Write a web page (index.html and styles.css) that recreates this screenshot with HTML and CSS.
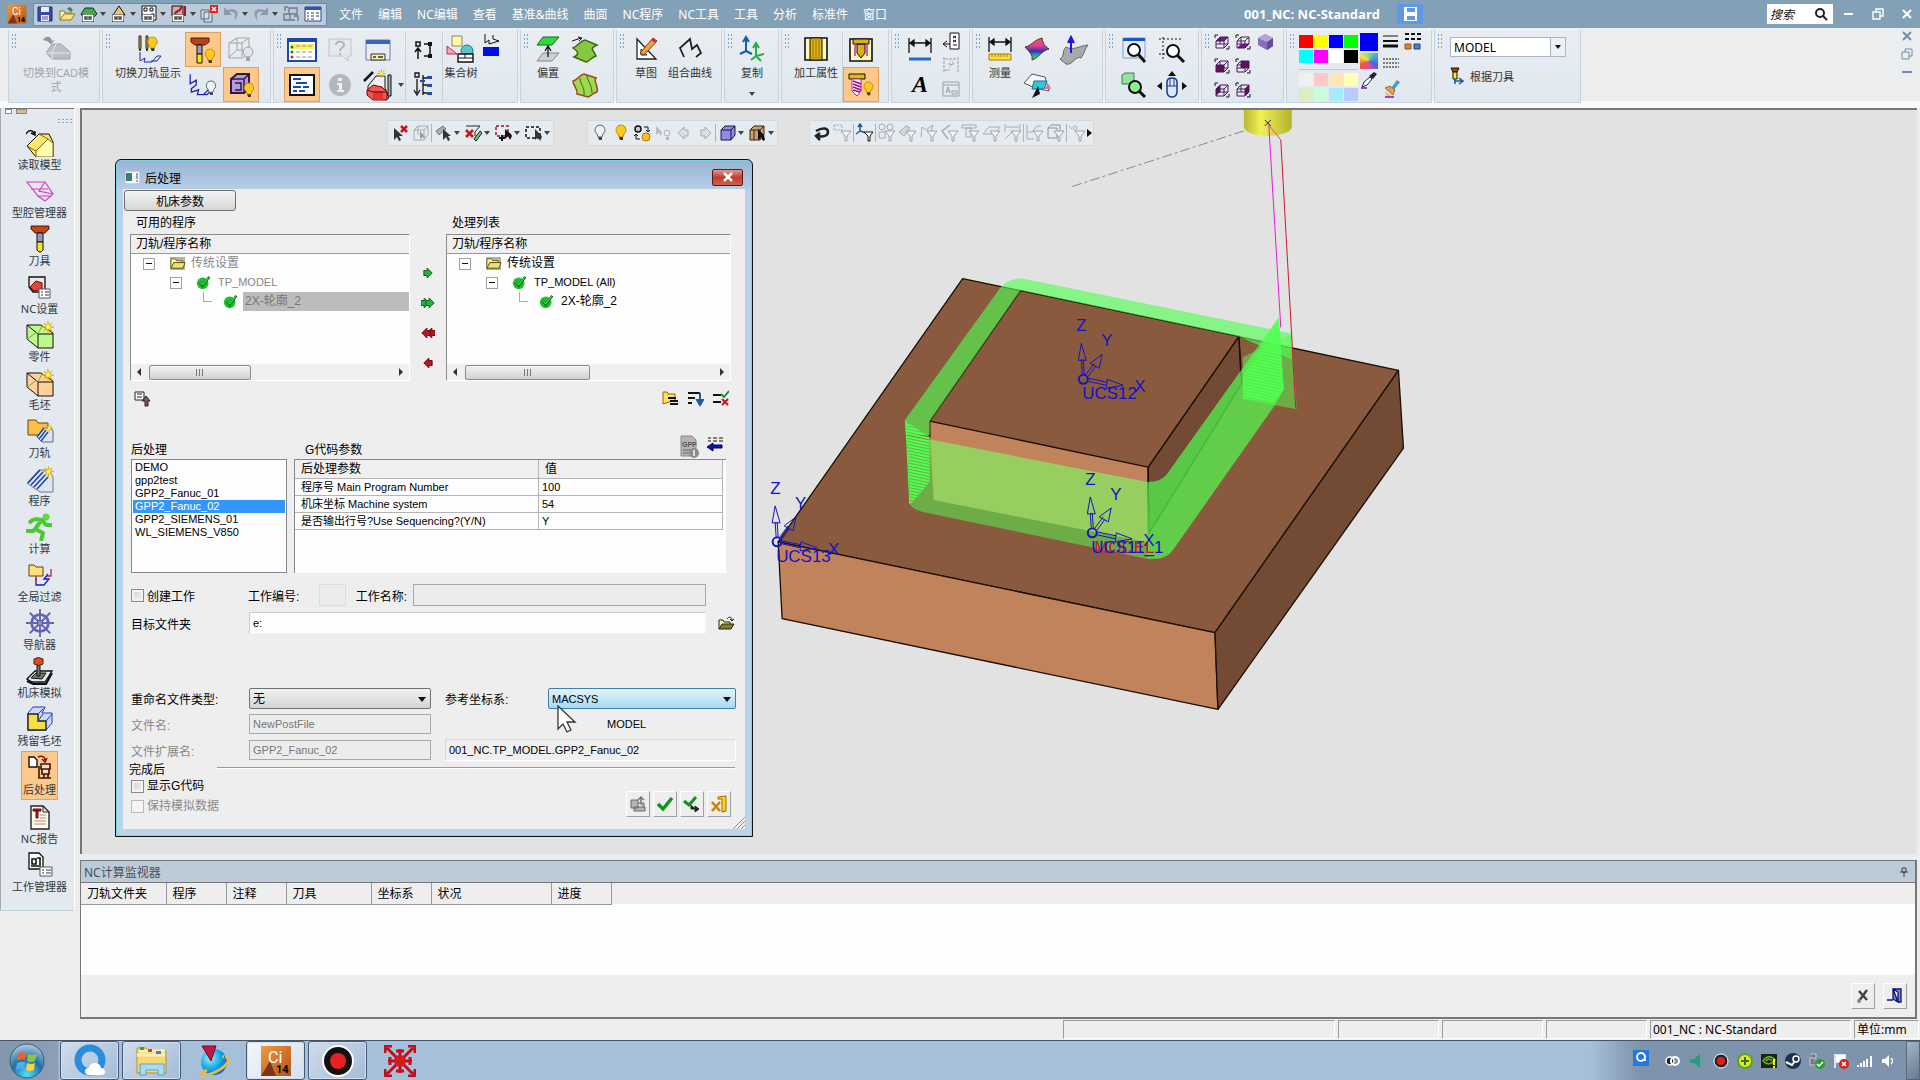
FILE: index.html
```
<!DOCTYPE html>
<html lang="zh-CN">
<head>
    <meta charset="UTF-8">
    <meta name="viewport" content="width=device-width, initial-scale=1.0">
    <title>001_NC : NC-Standard</title>
    <link rel="stylesheet" href="styles.css">
</head>
<body>
    <!-- Shared icon shapes -->
    <svg class="sprite" aria-hidden="true">
        <linearGradient id="gOrange" x1="0" y1="0" x2="1" y2="1"><stop offset="0" stop-color="#f09a3c"/><stop offset="1" stop-color="#b4521c"/></linearGradient>
        <linearGradient id="gYellow" x1="0" y1="0" x2="1" y2="0"><stop offset="0" stop-color="#b9b92c"/><stop offset=".35" stop-color="#f0f05a"/><stop offset="1" stop-color="#b4b42a"/></linearGradient>
        <linearGradient id="gRain" x1="0" y1="0" x2="0" y2="1"><stop offset="0" stop-color="#f05a28"/><stop offset=".35" stop-color="#e040a0"/><stop offset=".6" stop-color="#3030b0"/><stop offset=".8" stop-color="#20b0a0"/><stop offset="1" stop-color="#70d040"/></linearGradient>
        <radialGradient id="gOrb" cx=".5" cy=".9" r=".9"><stop offset="0" stop-color="#4fe0ff"/><stop offset=".5" stop-color="#1f6fa8"/><stop offset="1" stop-color="#b8cfe0"/></radialGradient>
        <radialGradient id="gGlobe" cx=".35" cy=".35" r=".8"><stop offset="0" stop-color="#8ff4ff"/><stop offset=".5" stop-color="#1aa8e8"/><stop offset="1" stop-color="#0a4f9c"/></radialGradient>

        <symbol id="bulb" viewBox="0 0 12 18"><path d="M6 1a5 5 0 0 0-3 9l1 3h4l1-3a5 5 0 0 0-3-9z" fill="#ffc81e" stroke="#c88a00"/><path d="M4 13h4v3H5z" fill="#333"/></symbol>
        <symbol id="bulb-off" viewBox="0 0 12 18"><path d="M6 1a5 5 0 0 0-3 9l1 3h4l1-3a5 5 0 0 0-3-9z" fill="#eef1f4" stroke="#666"/><path d="M4 13h4v3H5z" fill="#444"/></symbol>
        <symbol id="funnel" viewBox="0 0 20 20"><path d="M8 8h10l-4 5v5h-2v-5z" fill="#f2f4f6" stroke="#9aa2aa"/></symbol>
        <symbol id="path3d" viewBox="0 0 20 20"><path d="M1 1v8l5-3v4l-4 3v3l6-2-1 4h5l4-4h3l-4 4h-4" fill="none" stroke="#2222b8" stroke-width="1.1"/></symbol>
        <symbol id="check" viewBox="0 0 18 18"><ellipse cx="8" cy="10" rx="7" ry="7" fill="#18c32c"/><path d="M4 8l4 5 8-11" fill="none" stroke="#0a7a18" stroke-width="3"/><path d="M4 8l4 4 7-9" fill="none" stroke="#8af49a" stroke-width="1"/></symbol>
        <symbol id="folder" viewBox="0 0 18 16"><path d="M1 1h16v14H1z" fill="#b5b39a"/><path d="M2 13V3h5l1 2h6v2" fill="#fff6a0" stroke="#6c682a"/><path d="M2 13L5 7h12l-2 6z" fill="#f0e070" stroke="#4e4a14"/></symbol>
        <symbol id="star" viewBox="0 0 12 12"><path d="M6 0v12M0 6h12M2 2l8 8M10 2l-8 8" stroke="#e8b80c" stroke-width="1.4"/><circle cx="6" cy="6" r="2" fill="#fff27a"/></symbol>
        <symbol id="cubebox" viewBox="0 0 28 28"><path d="M1 4h14l12 8v15H12L1 18z" stroke="#111" fill="inherit"/><path d="M1 4l11 9h15M12 13v14" fill="none" stroke="#111"/><path d="M12 13L16 5M1 18l10-7" stroke="#7a6" fill="none"/></symbol>
        <symbol id="view" viewBox="0 0 18 18"><path d="M2 5V2h3M13 16h3v-3" fill="none" stroke="#111"/><path d="M3 8l4-4h8v7l-4 4H3zM3 8h8v7M11 8l4-4M7 4v7H3M7 11h8" fill="none" stroke="#4a1a5a"/></symbol>
        <symbol id="haas" viewBox="0 0 12 8"><path d="M0 0h12v8H0z" fill="#fff" stroke="#111"/><path d="M3 2v4M3 4h2M5 2v4M7 2v4M7 4h2M9 2v4" stroke="#111"/></symbol>
        <symbol id="dim" viewBox="0 0 24 16"><path d="M1 0v15M23 0v15M2 5h20M2 5l4-3v6zM22 5l-4-3v6z" stroke="#111" stroke-width="1.3" fill="#111"/></symbol>
        <symbol id="arrow-r" viewBox="0 0 12 14"><path d="M1 4h4V1l6 6-6 6v-3H1z" fill="#1fb53a" stroke="#064a10"/></symbol>
        <symbol id="arrow-l" viewBox="0 0 12 14"><path d="M11 4H7V1L1 7l6 6v-3h4z" fill="#c0141e" stroke="#4a0408"/></symbol>
        <symbol id="ci" viewBox="0 0 32 32"><path d="M1 1h30v30H1z" fill="url(#gOrange)"/><path d="M1 31l9-15 6 15z" fill="#7c3418"/><text x="8" y="18" font-family="Roboto" font-size="16" fill="#fff">Ci</text><text x="16" y="28" font-family="Roboto" font-weight="700" font-size="11">14</text></symbol>
    </svg>

    <header class="titlebar">
        <svg class="app-icon" width="20" height="20" viewBox="0 0 32 32"><use href="#ci"/></svg>
        <div class="quickbar">
            <button aria-label="保存"><svg width="18" height="18" viewBox="0 0 18 18"><path d="M2 2h14v14H2z" fill="#3a4aa8" stroke="#1c2a70"/><path d="M5 2h8v5H5zM5 10h8v6H5z" fill="#e8eefa"/><path d="M6 12h6M6 14h6" stroke="#556"/></svg></button>
            <button aria-label="打开"><svg width="18" height="18" viewBox="0 0 18 18"><path d="M2 15V6h4l1 2h7v3" fill="#fff3b0" stroke="#8a7a28"/><path d="M2 15l4-6h11l-4 6z" fill="#ffe680" stroke="#8a7a28"/><path d="M9 4c2-3 5-2 5 1l2-1-3 3-2-2" fill="#2c8a3a"/></svg></button>
            <button class="drop" aria-label="零件"><svg width="18" height="18" viewBox="0 0 18 18"><path d="M1 9l4-6h8l4 6-3 3H3z" fill="#3cb03c" stroke="#134"/><use href="#haas" x="2" y="9" width="12" height="8"/></svg></button>
            <button class="drop" aria-label="装配"><svg width="18" height="18" viewBox="0 0 18 18"><path d="M9 1l6 9H3z" fill="#f4c070" stroke="#111"/><use href="#haas" x="2" y="9" width="12" height="8"/></svg></button>
            <button class="drop" aria-label="工程图"><svg width="18" height="18" viewBox="0 0 18 18"><path d="M2 1h14v14H2z" fill="#fff" stroke="#111"/><path d="M4 3h3v3H4zM10 3h3v3h-3zM11 9h3v3" fill="none" stroke="#111"/><use href="#haas" x="2" y="9" width="12" height="8"/></svg></button>
            <button class="drop" aria-label="NC"><svg width="18" height="18" viewBox="0 0 18 18"><path d="M2 1h11v10H2z" fill="#d8a8a8" stroke="#111"/><path d="M5 10c0-6 6-2 6-8M15 1v10" stroke="#a01818" fill="none" stroke-width="2"/><use href="#haas" x="2" y="9" width="12" height="8"/></svg></button>
            <button aria-label="关闭"><svg width="18" height="18" viewBox="0 0 18 18"><path d="M1 5h8v9H1zM4 7h8v10H4z" fill="#d8dfe6" stroke="#556a80"/><path d="M10 0h8v8h-8z" fill="#d22"/><path d="M12 2l4 4M16 2l-4 4" stroke="#fff" stroke-width="1.5"/></svg></button>
            <button class="drop" aria-label="撤销"><svg width="18" height="18" viewBox="0 0 18 18"><path d="M2 2v8h8L7 7c5-2 8 1 5 9 7-8 3-14-7-11z" fill="#8b9aab"/></svg></button>
            <button class="drop" aria-label="重做"><svg width="18" height="18" viewBox="0 0 18 18"><path d="M16 2v8H8l3-3C6 5 3 8 6 16-1 8 3 2 13 5z" fill="#8b9aab"/></svg></button>
            <button aria-label="更新"><svg width="18" height="18" viewBox="0 0 18 18"><path d="M7 3h8v6H7zM2 9h6v6H2zM12 11h4v5M3 6V2h3M9 15h4" fill="none" stroke="#6a7a8c" stroke-width="1.3"/></svg></button>
            <button aria-label="列表"><svg width="18" height="18" viewBox="0 0 18 18"><path d="M1 2h16v14H1z" fill="#fff" stroke="#2a4690"/><path d="M1 2h16v3H1z" fill="#2a56b0"/><path d="M3 8h2M7 8h3M12 8h3M3 11h2M7 11h3M12 11h3M3 14h2M7 14h3" stroke="#335"/></svg></button>
        </div>
        <nav class="menu">
            <a href="#">文件</a><a href="#">编辑</a><a href="#">NC编辑</a><a href="#">查看</a><a href="#">基准&amp;曲线</a><a href="#">曲面</a><a href="#">NC程序</a><a href="#">NC工具</a><a href="#">工具</a><a href="#">分析</a><a href="#">标准件</a><a href="#">窗口</a>
        </nav>
        <div class="doc-title">
            <h1>001_NC: NC-Standard</h1>
            <svg width="26" height="20" viewBox="0 0 26 20"><path d="M0 0h26v20H0z" fill="#5f98e6"/><path d="M7 3h13v14H7z" fill="#fff"/><path d="M10 4h8v4h-8zM10 12h8v4h-8z" fill="#5f98e6"/></svg>
        </div>
        <label class="search">
            <input type="text" placeholder="搜索" aria-label="搜索">
            <svg width="14" height="14" viewBox="0 0 14 14"><circle cx="6" cy="6" r="4" fill="none" stroke="#222" stroke-width="2"/><path d="M9 9l4 4" stroke="#222" stroke-width="2"/></svg>
        </label>
        <div class="win-controls">
            <button aria-label="最小化"><svg width="12" height="12"><path d="M1 6h9" stroke="#fff" stroke-width="2"/></svg></button>
            <button aria-label="还原"><svg width="12" height="12"><path d="M4 4V1h7v7H8M1 4h7v7H1z" fill="none" stroke="#fff" stroke-width="1.4"/></svg></button>
            <button aria-label="关闭"><svg width="12" height="12"><path d="M2 2l8 8M10 2l-8 8" stroke="#fff" stroke-width="2"/></svg></button>
        </div>
    </header>

    <div class="ribbon">
        <section class="group g-cad">
            <i class="grip"></i>
            <button class="big disabled"><svg width="32" height="28" viewBox="0 0 32 28"><path d="M3 5c3-5 8-4 9 1l3-1-4 4-4-3" fill="#8e959c"/><path d="M6 18l6-9h9l9 8v7H12z" fill="#b9bfc5" stroke="#9aa1a8"/><path d="M12 24V18h18M12 18l-6 0M12 18l4-9" stroke="#e8eaec" fill="none"/></svg><span>切换到CAD模式</span></button>
        </section>
        <section class="group g-show">
            <i class="grip"></i>
            <button class="big wide"><svg width="28" height="28" viewBox="0 0 28 28"><path d="M5 1h2v12l-1 3-1-3zM12 1h2v12l-1 3-1-3z" fill="#d8b830" stroke="#222"/><use href="#bulb" x="12" y="1" width="13" height="17"/><path d="M6 17v9l5-3-1 4h8l5-6h4l-4 5h-6" stroke="#2222b8" fill="none"/></svg><span>切换刀轨显示</span></button>
            <div class="col">
                <button class="tool on" aria-label="刀具显示"><svg width="30" height="30" viewBox="0 0 30 30"><path d="M3 3h18v4l-4 3H7L3 7z" fill="#b8401c" stroke="#5a1808"/><path d="M9 10h5v9H9z" fill="#9a9ac8" stroke="#111"/><path d="M9 19h5v9H9z" fill="#f2e810" stroke="#111"/><use href="#bulb" x="16" y="13" width="12" height="17"/></svg></button>
                <button class="tool" aria-label="刀轨显示"><svg width="30" height="30" viewBox="0 0 30 30"><use href="#path3d" x="1" y="2" width="24" height="26"/><use href="#bulb-off" x="17" y="10" width="12" height="17"/></svg></button>
            </div>
            <div class="col">
                <button class="tool" aria-label="毛坯显示"><svg width="30" height="30" viewBox="0 0 30 30"><path d="M3 8l8-5h12v14l-6 6H3zM3 8h13v14M16 8l7-5M11 3v12L3 22M11 15h12" fill="none" stroke="#9ea5ab"/><circle cx="22" cy="17" r="5" fill="#e2e6ea" stroke="#9ea5ab"/><path d="M20 22h4v4h-4z" fill="#9ea5ab"/></svg></button>
                <button class="tool on" aria-label="零件显示"><svg width="30" height="30" viewBox="0 0 30 30"><path d="M5 9l6-5h12v14l-5 5H5z" fill="#b49cd8" stroke="#32184a" stroke-width="2"/><path d="M5 9h13v14M18 9l5-5M9 13h6v7H9" fill="none" stroke="#32184a" stroke-width="1.5"/><use href="#bulb" x="17" y="12" width="12" height="17"/></svg></button>
            </div>
        </section>
        <section class="group g-list">
            <i class="grip"></i>
            <div class="col">
                <button class="tool" aria-label="程序列表"><svg width="30" height="26" viewBox="0 0 30 26"><path d="M1 2h28v22H1z" fill="#fff" stroke="#1c4aa8" stroke-width="2"/><path d="M1 1h28v4H1z" fill="#1c4aa8"/><path d="M3 7h24v5H3z" fill="#f8f060"/><path d="M9 9h17M9 15h17M9 20h17" stroke="#998" stroke-dasharray="4 2"/><circle cx="5" cy="10" r="1.5" fill="#1a8a2a"/><circle cx="5" cy="15" r="1.5" fill="#1a8a2a"/><circle cx="5" cy="20" r="1.5" fill="#d22"/></svg></button>
                <button class="tool on" aria-label="监视器"><svg width="28" height="24" viewBox="0 0 28 24"><path d="M2 2h24v20H2z" fill="#fff" stroke="#111" stroke-width="2"/><path d="M5 6h8M8 10h11M5 14h8M15 14h6M5 18h4M11 18h6" stroke="#1c4aa8" stroke-width="2.2"/></svg></button>
            </div>
            <div class="col">
                <button class="tool" aria-label="帮助"><svg width="26" height="26" viewBox="0 0 26 26"><path d="M2 2h22v17h-3v5l-5-5H2z" fill="#e6e9ec" stroke="#c0c5ca"/><path d="M9 8c0-5 8-4 8 0 0 3-4 2-4 6M13 16v2" fill="none" stroke="#b0b5ba" stroke-width="2"/></svg></button>
                <button class="tool" aria-label="信息"><svg width="24" height="24" viewBox="0 0 24 24"><circle cx="12" cy="12" r="11" fill="#b4b8bc"/><path d="M10 5h4v3h-4zM9 10h5v7h2v2H9v-2h2v-5H9z" fill="#eef0f2"/></svg></button>
            </div>
            <div class="col last">
                <button class="tool" aria-label="窗口"><svg width="26" height="24" viewBox="0 0 26 24"><path d="M1 2h24v20H1z" fill="#e8ecf2" stroke="#6a7fa8"/><path d="M1 2h24v4H1z" fill="#3a66b8"/><path d="M6 16h14v6H6z" fill="#f8f0a0" stroke="#333"/><path d="M8 19h3M13 19h5" stroke="#333" stroke-width="1.5"/></svg></button>
                <button class="tool drop" aria-label="加工"><svg width="32" height="32" viewBox="0 0 32 32"><path d="M5 17l8-10h9v12l4 10H11l-6-5z" fill="#f0f0f0" stroke="#111"/><path d="M4 21l6-5 9 2 5 5v8H10l-6-5z" fill="#f05858" stroke="#700"/><path d="M10 22h10v9H10z" fill="#e03434"/><path d="M4 21l6 2h14" stroke="#700" fill="none"/><path d="M1 12l9-9" stroke="#111" stroke-width="2.5"/><path d="M25 6h3v21h-3z" fill="#aaa" stroke="#111"/><use href="#star" x="14" y="0" width="9" height="9"/></svg></button>
            </div>
            <div class="col narrow">
                <button class="tool" aria-label="折叠"><svg width="20" height="22" viewBox="0 0 20 22"><path d="M2 3h4v4H2zM4 20V10M1 13l3-4 3 4M10 5h4M16 7v9M10 17h4" fill="none" stroke="#111" stroke-width="1.5"/><path d="M14 3h4v4h-4zM14 15h4v4h-4z" fill="#111"/></svg></button>
                <button class="tool" aria-label="展开"><svg width="22" height="26" viewBox="0 0 22 26"><path d="M2 1h4v4H2zM4 7v14M1 18l3 5 3-5M10 3v20M10 6h4M10 13h4M10 21h4" fill="none" stroke="#111" stroke-width="1.3"/><path d="M14 4h5v3h-5zM14 12h5v3h-5zM14 20h5v3h-5zM7 8h5v2H7z" fill="#2a4aa8"/></svg></button>
            </div>
            <button class="big"><svg width="30" height="28" viewBox="0 0 30 28"><path d="M6 1h10v10H6z" fill="#fff8a0" stroke="#887"/><path d="M1 11l10 8H1z" fill="#f4a8b8" stroke="#a35"/><circle cx="21" cy="16" r="6" fill="#5cc4cc" stroke="#277"/><path d="M12 19h15v8H12z" fill="#fff" stroke="#111" stroke-width="1.4"/><path d="M12 23h15M19 19v4" stroke="#111"/></svg><span>集合树</span></button>
            <button class="tool" aria-label="曲线"><svg width="20" height="26" viewBox="0 0 20 26"><path d="M4 1v9l4-3v4l10-3-6-2V2" fill="none" stroke="#111"/><path d="M2 14h16v9H2z" fill="#0010e0"/></svg></button>
        </section>
        <section class="group g-offset">
            <i class="grip"></i>
            <button class="big"><svg width="28" height="28" viewBox="0 0 28 28"><path d="M3 10L9 2h16l-7 8z" fill="#2ddc3a" stroke="#0a6a14"/><path d="M3 26l6-8h16l-7 8z" fill="#ccd0d4" stroke="#888"/><path d="M14 22V12M11 16l3-5 3 5" stroke="#111" fill="none" stroke-width="1.3"/></svg><span>偏置</span></button>
            <div class="col">
                <button class="tool" aria-label="曲面"><svg width="28" height="28" viewBox="0 0 28 28"><path d="M2 12c5-2 7-7 12-8l12 5c-5 2-6 4-3 7l2 4c-4 1-6 5-10 6L3 21c5-2 5-5-1-9z" fill="#86c840" stroke="#3a6a14" stroke-width="1.5"/><path d="M1 5l9-3M7 1l4 1-3 3" stroke="#111" fill="none"/></svg></button>
                <button class="tool" aria-label="补面"><svg width="28" height="28" viewBox="0 0 28 28"><path d="M2 10c5-1 6-6 11-7l12 4c-3 4 3 8 1 14-5 1-5 4-9 5L6 23c1-6-4-8-4-13z" fill="#a0d850" stroke="#9a4a1c" stroke-width="1.5"/><path d="M9 7c0 6 5 9 4 17M16 4c0 6 5 9 5 18" stroke="#3a6a14" fill="none"/></svg></button>
            </div>
        </section>
        <section class="group g-sketch">
            <i class="grip"></i>
            <button class="big"><svg width="26" height="26" viewBox="0 0 26 26"><path d="M4 3v20h19z" fill="#fff" stroke="#222" stroke-width="1.3"/><path d="M8 13v6h6z" fill="none" stroke="#222"/><path d="M7 17L20 2l4 3L11 19z" fill="#f0a040" stroke="#7a3c10"/><path d="M20 2l4 3-2 2-4-3z" fill="#d03030"/></svg><span>草图</span></button>
            <button class="big"><svg width="26" height="26" viewBox="0 0 26 26"><path d="M7 21L3 12 13 3l2 10 5-4 4 8-5 4" fill="none" stroke="#222" stroke-width="1.8"/></svg><span>组合曲线</span></button>
        </section>
        <section class="group g-copy">
            <i class="grip"></i>
            <button class="big drop"><svg width="28" height="28" viewBox="0 0 28 28"><path d="M8 16V3M5 7l3-5 3 5M8 16l-6 3M8 16l6 3" stroke="#1c5aa8" fill="none" stroke-width="2"/><path d="M18 22V10M15 13l3-5 3 5M18 21l8-2M18 21l-5 4M18 21l5 5" stroke="#26b040" fill="none" stroke-width="2"/></svg><span>复制</span></button>
        </section>
        <section class="group g-attr">
            <i class="grip"></i>
            <button class="big"><svg width="26" height="26" viewBox="0 0 26 26"><path d="M2 2h22v22H2z" fill="#fff9b8" stroke="#111" stroke-width="1.6"/><path d="M7 2h12v22H7z" fill="#d8b010" stroke="#111"/><path d="M10 2v22M13 2v22M16 2v22" stroke="#a07c00"/></svg><span>加工属性</span></button>
            <div class="col ruled">
                <button class="tool" aria-label="孔"><svg width="26" height="26" viewBox="0 0 26 26"><path d="M2 2h22v22H2z" fill="#fff9b8" stroke="#111" stroke-width="1.6"/><path d="M5 2h16v5H5zM9 7h8v9l-4 5-4-5z" fill="#d8b010" stroke="#111"/><path d="M7 7v12M19 7v12" stroke="#d020c0" stroke-width="1.5"/></svg></button>
                <button class="tool on" aria-label="螺纹"><svg width="28" height="28" viewBox="0 0 28 28"><path d="M2 3h16v5H2z" fill="#d8c010" stroke="#111"/><path d="M5 8h9v12l-4 5-5-5z" fill="#fff" stroke="#c020b0"/><path d="M6 10l8 3M6 13l8 3M6 16l8 3M6 19l7 2" stroke="#a00878" stroke-width="1.5"/><use href="#bulb" x="16" y="10" width="11" height="16"/></svg></button>
            </div>
        </section>
        <section class="group g-dim">
            <i class="grip"></i>
            <div class="col">
                <button class="tool" aria-label="尺寸"><svg width="26" height="26" viewBox="0 0 26 26"><use href="#dim" x="1" y="1" width="24" height="16"/><path d="M2 22h22" stroke="#1c6ec0" stroke-width="3"/></svg></button>
                <button class="tool letter" aria-label="文字">A</button>
            </div>
            <div class="col mini">
                <button aria-label="引线"><svg width="18" height="18" viewBox="0 0 18 18"><path d="M8 1h9v16H8z" fill="#fff" stroke="#111"/><path d="M11 4l3 2M14 4l-3 2M11 8l3 2M14 8l-3 2M11 13h4M8 12H2M5 9l-4 3 4 3" stroke="#111" fill="none"/></svg></button>
                <button aria-label="公差"><svg width="18" height="18" viewBox="0 0 18 18"><path d="M2 1v15M16 1v15M3 3h12M3 14h5M6 8h6l-2-3M10 8l-3 4" stroke="#999fa6" fill="none" stroke-dasharray="3 1"/></svg></button>
                <button aria-label="标题栏"><svg width="18" height="18" viewBox="0 0 18 18"><path d="M1 2h16v14H1zM1 5h16M4 13l2-6 2 6M5 11h3M10 11h5v3h-5z" stroke="#999fa6" fill="none"/></svg></button>
            </div>
        </section>
        <section class="group g-measure">
            <i class="grip"></i>
            <button class="big"><svg width="26" height="26" viewBox="0 0 26 26"><use href="#dim" x="1" y="1" width="24" height="16"/><path d="M2 18h22v6H2z" fill="#ffe040" stroke="#a8780c"/><path d="M5 18v3M8 18v3M11 18v3M14 18v3M17 18v3M20 18v3" stroke="#a8780c"/></svg><span>测量</span></button>
            <div class="col">
                <button class="tool" aria-label="分析面"><svg width="28" height="28" viewBox="0 0 28 28"><path d="M2 11c6-1 9-7 17-9 1 6 3 8 7 11-8 2-10 9-17 11 1-6-3-8-7-13z" fill="url(#gRain)" stroke="#533"/></svg></button>
                <button class="tool" aria-label="剖面"><svg width="28" height="28" viewBox="0 0 28 28"><path d="M1 12L9 3l13 3 4 14-14-3z" fill="#f4f6f8" stroke="#555"/><path d="M11 10h13l-3 8H9z" fill="#38c4d8" stroke="#178"/><path d="M20 18h8l-2-5z" fill="#d87aa0"/><path d="M9 27l6-12 2 8z" fill="#111"/></svg></button>
            </div>
            <button class="tool" aria-label="法向"><svg width="32" height="32" viewBox="0 0 32 32"><path d="M2 24c5-3 2-9 6-12 7 4 13-1 22-2-4 5-3 8-7 13-5-3-9 8-15 6z" fill="#a8aaac" stroke="#666"/><path d="M13 18V4M10 8l3-6 3 6" stroke="#1818e0" fill="#1818e0" stroke-width="2"/></svg></button>
        </section>
        <section class="group g-zoom">
            <i class="grip"></i>
            <div class="col">
                <button class="tool" aria-label="缩放全部"><svg width="28" height="28" viewBox="0 0 28 28"><path d="M3 2h22v20H3z" fill="#e4ecf8" stroke="#7c9cd0"/><path d="M3 2h22v3H3z" fill="#1c56c8"/><circle cx="14" cy="14" r="6" fill="#fff" stroke="#111" stroke-width="2"/><path d="M18 18l7 8" stroke="#111" stroke-width="3"/></svg></button>
                <button class="tool" aria-label="缩放选中"><svg width="28" height="28" viewBox="0 0 28 28"><path d="M2 4l3-2h9v9l-3 2H2z" fill="#9ae09a" stroke="#286"/><circle cx="15" cy="16" r="6" fill="#8cf08c" stroke="#111" stroke-width="2"/><path d="M19 20l6 6" stroke="#111" stroke-width="3"/></svg></button>
            </div>
            <div class="col">
                <button class="tool" aria-label="窗口缩放"><svg width="28" height="28" viewBox="0 0 28 28"><path d="M5 1v22M1 3h22M1 18h9" stroke="#111" stroke-dasharray="2 2" fill="none"/><circle cx="15" cy="15" r="6" fill="#fff" stroke="#111" stroke-width="2"/><path d="M19 19l7 7" stroke="#111" stroke-width="3"/></svg></button>
                <button class="tool" aria-label="平移"><svg width="30" height="28" viewBox="0 0 30 28"><path d="M15 0l4 5h-8zM0 15l5-4v8zM30 15l-5-4v8z" fill="#111"/><path d="M10 11q0-4 5-4t5 4v9q0 6-5 6t-5-6z" fill="#dce8fa" stroke="#1c3a88" stroke-width="1.5"/><path d="M10 15h10M13 7v8M17 7v8" stroke="#1c3a88"/></svg></button>
            </div>
        </section>
        <section class="group g-views">
            <i class="grip"></i>
            <div class="view-grid">
                <button aria-label="俯视"><svg width="18" height="18"><path d="M3 8l4-4h8l-4 4z" fill="#7a1a8a"/><use href="#view"/></svg></button>
                <button aria-label="仰视"><svg width="18" height="18"><path d="M3 15l4-4h8l-4 4z" fill="#7a1a8a"/><use href="#view"/></svg></button>
                <button aria-label="轴测"><svg width="20" height="18" viewBox="0 0 20 18"><path d="M3 5l7-4 8 4v8l-6 4-9-5z" fill="#8a70b8"/><path d="M3 5l9 4 6-4-8-4z" fill="#b8a4dc"/><path d="M12 9v8l6-4V5z" fill="#684c98"/></svg></button>
                <button aria-label="前视"><svg width="18" height="18"><path d="M3 8h8v7H3z" fill="#6a0a5a"/><use href="#view"/></svg></button>
                <button aria-label="后视"><svg width="18" height="18"><path d="M7 4h8v7H7z" fill="#6a0a5a"/><use href="#view"/></svg></button>
                <i></i>
                <button aria-label="左视"><svg width="18" height="18"><path d="M3 8l4-4v7l-4 4z" fill="#6a0a5a"/><use href="#view"/></svg></button>
                <button aria-label="右视"><svg width="18" height="18"><path d="M11 8l4-4v7l-4 4z" fill="#6a0a5a"/><use href="#view"/></svg></button>
            </div>
        </section>
        <section class="group g-color">
            <i class="grip"></i>
            <div class="palette">
                <button class="c-red" aria-label="红"></button><button class="c-yellow" aria-label="黄"></button><button class="c-blue" aria-label="蓝"></button><button class="c-green" aria-label="绿"></button>
                <button class="c-cyan" aria-label="青"></button><button class="c-magenta" aria-label="品红"></button><button class="c-white" aria-label="白"></button><button class="c-black" aria-label="黑"></button>
                <hr>
                <button class="c-p1" aria-label="浅灰"></button><button class="c-p2" aria-label="浅红"></button><button class="c-p3" aria-label="浅橙"></button><button class="c-p4" aria-label="浅黄"></button>
                <button class="c-p5" aria-label="浅橄榄"></button><button class="c-p6" aria-label="浅绿"></button><button class="c-p7" aria-label="浅青"></button><button class="c-p8" aria-label="浅蓝"></button>
            </div>
            <div class="palette-side">
                <button class="current" aria-label="当前颜色"></button>
                <button class="wheel" aria-label="调色板"></button>
                <button aria-label="拾取颜色"><svg width="18" height="18" viewBox="0 0 18 18"><path d="M2 16l2-5 6-5 2 2-5 6z" fill="#fff" stroke="#224"/><path d="M9 5l5-4 3 2-4 5z" fill="#223"/><path d="M1 17h6" stroke="#a040d0" stroke-width="2"/></svg></button>
            </div>
            <div class="palette-side">
                <button aria-label="线宽"><svg width="18" height="18"><path d="M1 3h15" stroke="#111"/><path d="M1 8h15" stroke="#111" stroke-width="2"/><path d="M1 13h15" stroke="#111" stroke-width="3"/></svg></button>
                <button aria-label="线型"><svg width="18" height="18"><path d="M1 6h16M1 10h16M1 14h16" stroke="#111" stroke-dasharray="2 1"/></svg></button>
                <button class="pushed" aria-label="格式刷"><svg width="18" height="20" viewBox="0 0 18 20"><path d="M9 9l6-8 3 2-6 8z" fill="#48a0c8"/><path d="M3 9l5-2 5 4-2 5z" fill="#e8a040" stroke="#965"/><path d="M3 12l7 5-6 1z" fill="#f4c070"/><path d="M3 18h9" stroke="#a040d0" stroke-width="2"/></svg></button>
            </div>
            <div class="palette-side">
                <button aria-label="样式"><svg width="18" height="18"><path d="M1 1h16M1 6h16" stroke="#111" stroke-width="2" stroke-dasharray="4 2"/><path d="M1 11h6v5H1z" fill="#e88028" stroke="#853"/><path d="M10 11h6v5h-6z" fill="#4080e0" stroke="#246"/></svg></button>
            </div>
        </section>
        <section class="group g-model">
            <i class="grip"></i>
            <div class="model-col">
                <div class="combo model-combo"><select aria-label="坐标系"><option>MODEL</option></select></div>
                <button class="by-tool"><svg width="14" height="18" viewBox="0 0 14 18"><path d="M1 1h8l-2 4H3z" fill="#c03818" stroke="#111"/><path d="M3 5h4v7H3z" fill="#f4e830" stroke="#111"/><path d="M4 14h8M9 11l4 3-4 3M5 12v5" stroke="#1c5aa8" fill="none" stroke-width="1.5"/></svg>根据刀具</button>
            </div>
        </section>
        <div class="mdi-controls">
            <button aria-label="关闭文档"><svg width="12" height="12"><path d="M2 2l8 8M10 2l-8 8" stroke="#6f8eae" stroke-width="2"/></svg></button>
            <button aria-label="还原文档"><svg width="12" height="12"><path d="M4 4V1h7v7H8M1 4h7v7H1z" fill="none" stroke="#6f8eae"/></svg></button>
            <button aria-label="最小化文档"><svg width="12" height="12"><path d="M1 6h10" stroke="#6f8eae" stroke-width="2"/></svg></button>
        </div>
    </div>

    <main class="workspace">
        <aside class="sidebar">
            <div class="side-tabs"><i></i><i class="tan"></i></div>
            <div class="side-grip"></div>
            <button><svg width="28" height="28" viewBox="0 0 28 28"><path d="M1 17L13 5h10l4 8v15H10z" fill="#ffe870" stroke="#111"/><path d="M10 22L22 10l5 4v14H10z" fill="#fffbb0" stroke="#7a6a10"/><path d="M1 17l9 5M13 5l9 5" stroke="#7a6a10"/><path d="M0 5c3-5 7-4 8 0M5 4l4 2V2" fill="none" stroke="#111" stroke-width="1.5"/></svg>读取模型</button>
            <button><svg width="28" height="28" viewBox="0 0 28 28"><path d="M1 5h18l8 12-8 7-7-5zM1 5l11 14M19 5l-6 9 14 3M5 12h17M12 19h14" fill="#f6e0f6" fill-opacity=".4" stroke="#d040c8" stroke-width="1.2"/></svg>型腔管理器</button>
            <button><svg width="28" height="28" viewBox="0 0 28 28"><path d="M5 1h18v3l-4 4H9L5 4z" fill="#c04418" stroke="#501808"/><path d="M11 8h6v9h-6z" fill="#9a94c4" stroke="#111"/><path d="M11 17h6v8l-2 2h-2l-2-2z" fill="#f0ec10" stroke="#111"/></svg>刀具</button>
            <button><svg width="28" height="28" viewBox="0 0 28 28"><path d="M3 4h16v12l-5 3H7l-4-5z" fill="#e8e8e8" stroke="#111" stroke-width="1.3"/><path d="M4 14l6-6 6 2v6l-8 2z" fill="#e04838" stroke="#700"/><path d="M13 16h11v9H13z" fill="#fff" stroke="#556"/><path d="M15 19h2M19 19h4M15 22h2M19 22h4" stroke="#335"/></svg>NC设置</button>
            <button><svg width="28" height="28" viewBox="0 0 28 28" fill="#bff88a"><use href="#cubebox" width="28" height="28"/><use href="#star" x="16" y="0" width="12" height="12"/></svg>零件</button>
            <button><svg width="28" height="28" viewBox="0 0 28 28" fill="#ffd09a"><use href="#cubebox" width="28" height="28"/><use href="#star" x="16" y="0" width="12" height="12"/></svg>毛坯</button>
            <button><svg width="28" height="28" viewBox="0 0 28 28"><path d="M2 18V3h8l2 3h10v4l-9 8z" fill="#f8c048" stroke="#6a4208"/><path d="M11 20l7-9h7l2 3v11H16z" fill="#dce4f0" stroke="#667"/><path d="M11 20l7-9M13 22l7-9M15 24l7-9" stroke="#1c46a8" stroke-width="1.4"/><use href="#star" x="19" y="7" width="8" height="8"/></svg>刀轨</button>
            <button><svg width="28" height="28" viewBox="0 0 28 28"><path d="M1 18L13 5h10l4 7v15H14z" fill="#dce4f0" stroke="#778"/><path d="M2 18L14 5M5 20L17 7M8 22L20 9M11 24L22 12" stroke="#1c46a8" stroke-width="1.6"/><use href="#star" x="17" y="1" width="11" height="11"/></svg>程序</button>
            <button><svg width="28" height="28" viewBox="0 0 28 28"><circle cx="20" cy="4" r="3.5" fill="#5cdc40"/><path d="M8 6l8 1 4 5h6M15 8l-6 8 8 4-2 8M11 14l-4 4H0M8 6L3 10" fill="none" stroke="#4cc834" stroke-width="4" stroke-linejoin="round"/></svg>计算</button>
            <button><svg width="28" height="28" viewBox="0 0 28 28"><path d="M3 15V4h5l2 2h7v9z" fill="#ffe080" stroke="#5a4408"/><path d="M10 17v7h8l5-6h-5l4-5" stroke="#1818c8" fill="none" stroke-width="1.3"/><path d="M10 15v5M25 8v7h-4" stroke="#d02020" fill="none" stroke-width="1.3"/></svg>全局过滤</button>
            <button><svg width="32" height="30" viewBox="0 0 32 30"><g fill="none" stroke="#6464b4"><circle cx="16" cy="15" r="9" stroke-width="3"/><path d="M16 0v30M1 15h30M5 4l22 22M27 4L5 26" stroke-width="2"/></g><circle cx="16" cy="15" r="3" fill="#8c8cd0" stroke="#4a4a9a"/></svg>导航器</button>
            <button><svg width="28" height="28" viewBox="0 0 28 28"><path d="M1 22l8-8h17l-7 11H6z" fill="#e8e8e4" stroke="#111" stroke-width="1.3"/><path d="M5 21l5-5h10l-4 6z" fill="#688068" stroke="#111"/><path d="M1 24l6 3h13l6-11" fill="none" stroke="#111" stroke-width="2"/><path d="M11 8h3v11h-3z" fill="#777" stroke="#111"/><path d="M8 2q4-3 9 0v5q-4 3-9 0z" fill="#d85020" stroke="#601c04"/></svg>机床模拟</button>
            <button><svg width="28" height="28" viewBox="0 0 28 28"><path d="M2 8l5-6h12l-3 6h10v10l-6 7H2z" fill="#ccd8fa" stroke="#2a38b0"/><path d="M2 9h10v7h8v9H2z" fill="#f4e040" stroke="#222" stroke-width="1.4"/><path d="M12 9l5-5M12 16l5-7M20 16l6-7" stroke="#2a38b0"/></svg>残留毛坯</button>
            <button class="on"><svg width="28" height="28" viewBox="0 0 28 28"><path d="M3 3h5l3 3v7H3z" fill="#fff" stroke="#111" stroke-width="1.4"/><path d="M12 3c4-2 7 0 7 3M16 5l3 3 2-4" fill="none" stroke="#701010" stroke-width="1.5"/><path d="M15 10h9v5h-9zM14 24h11M16 15v5h7v-5M18 20v4M22 20v4M13 12v12h-1" fill="#f8dcc0" stroke="#401408" stroke-width="1.6"/></svg>后处理</button>
            <button><svg width="28" height="28" viewBox="0 0 28 28"><path d="M5 3h12l6 6v17H5z" fill="#fffbe8" stroke="#222" stroke-width="1.4"/><path d="M17 3v6h6" fill="none" stroke="#222"/><path d="M7 6h8v2H7zM10 8h2v7h-2z" fill="#c03018" stroke="#601"/><path d="M14 12h6M14 15h6M8 18h12M8 21h12" stroke="#a88"/></svg>NC报告</button>
            <button><svg width="28" height="28" viewBox="0 0 28 28"><path d="M3 2h10l4 4v12H3z" fill="#fff" stroke="#111" stroke-width="1.3"/><path d="M6 8h4v5H6zM11 7h3v7M5 15h10" fill="none" stroke="#111" stroke-width="1.6"/><path d="M14 16h12v9H14z" fill="#fff" stroke="#556"/><path d="M16 19h2M20 19h5M16 22h2M20 22h5" stroke="#335"/></svg>工作管理器</button>
        </aside>

        <div class="content">
            <section class="viewport">
                <svg class="scene" viewBox="82 109 1833 746" preserveAspectRatio="xMinYMin meet">
                    <defs>
                        <pattern id="passes" width="3" height="2" patternUnits="userSpaceOnUse" patternTransform="rotate(12)">
                            <path d="M0 1h3" stroke="#50ff50" stroke-width="1"/>
                        </pattern>
                        <pattern id="dense" width="2" height="3" patternUnits="userSpaceOnUse" patternTransform="rotate(12)">
                            <path d="M0 1h2" stroke="#50ff50" stroke-width="2"/>
                        </pattern>
                        <g id="axes" fill="none" stroke="#1414c4" stroke-width="1">
                            <circle r="4.5" stroke-width="2"/>
                            <path d="M-1-5L-2-20M1-5L0-20M-5-19L-2-36 3-19zM2-4L11-16M5-3L13-14M7-16L19-25 16-11zM5-1L24 3M5 2L23 6M24 0L40 6 23 9z"/>
                            <g font-family="Liberation Sans" font-size="17" fill="#1414c4" stroke="none">
                                <text x="-7" y="-48">Z</text><text x="18" y="-33">Y</text><text x="51" y="13">X</text>
                            </g>
                        </g>
                    </defs>
                    <!-- base block -->
                    <g stroke="#1a0e06" stroke-width="1.3" stroke-linejoin="round">
                        <path d="M965 278l437 92-184 263-438-91z" fill="#8a5a3e"/>
                        <path d="M780 542l438 91 3 77-437-91z" fill="#c0835b"/>
                        <path d="M1402 370l5 78-186 262-3-77z" fill="#734a33"/>
                        <!-- boss -->
                        <path d="M932 421l219 46 1 76-216-43z" fill="#c0835b" stroke="none"/>
                        <path d="M1242 336l3 47-93 150-1-66z" fill="#734a33"/>
                        <path d="M1023 290l219 46-91 131-219-46z" fill="#8a5a3e"/>
                        <path d="M932 421v16M1151 467v78M1242 336l2 40"/>
                    </g>
                    <!-- tool path curtains -->
                    <g fill="url(#passes)">
                        <path d="M1003 287q8-9 22-9l270 55v26l-53-23-219-46-91 131v14l-24-1-1-14z"/>
                        <path d="M1003 287q8-9 22-9l270 55v26l-53-23-219-46-91 131v14l-24-1-1-14z" fill="#50ff50" fill-opacity=".25"/>
                        <path d="M909 435l241 47q14 0 20-8l112-157 5 72-9 16-102 145q-6 9-18 9h-8l-225-47q-10-2-13-8z"/>
                        <path d="M932 439l218 43 2 61-216-43z" fill="#b8f078" fill-opacity=".3"/>
                        <path d="M1151 482q12 1 19-8l112-157 5 72-9 16-102 145q-6 9-18 9h-8z" fill="#50ff50" fill-opacity=".4"/>
                        <path d="M1246 357l49-24 5 76-54-10z"/>
                        <path d="M908 421l24 16v45l-19 22z" fill="url(#dense)"/>
                        <path d="M1246 377l36-60 5 72-10 13-31-4z" fill="url(#dense)"/>
                    </g>
                    <path d="M908 421l4 83" stroke="#50ff50"/>
                    <!-- tool holder and approach -->
                    <path d="M1247 109v17q2 8 24 9 22-1 24-9v-17z" fill="url(#gYellow)"/>
                    <path d="M1247 130L1074 186" stroke="#888" stroke-dasharray="10 3 3 3"/>
                    <path d="M1268 119l6 6M1274 119l-6 6" stroke="#222"/>
                    <path d="M1272 124l12 203" stroke="#e818d8" fill="none"/>
                    <path d="M1272 124l12 15" stroke="#e84890" fill="none"/>
                    <path d="M1284 139l15 269" stroke="#d01830" fill="none"/>
                    <!-- coordinate systems -->
                    <use href="#axes" x="1086" y="379"/>
                    <use href="#axes" x="779" y="542"/>
                    <use href="#axes" x="1095" y="533"/>
                    <g font-family="Liberation Sans" font-size="17" fill="#1414c4">
                        <text x="1085" y="399">UCS12</text>
                        <text x="778" y="562">UCS13</text>
                        <text x="1097" y="553" fill="#c81432">MODEL</text>
                        <text x="1094" y="553">UCS11_1</text>
                    </g>
                </svg>

                <div class="float-bar bar-select">
                    <button aria-label="取消选择"><svg width="18" height="18"><path d="M3 4v12l3-3 2 4 2-1-2-4h4z" fill="#333"/><path d="M10 2l6 6M16 2l-6 6" stroke="#c8141e" stroke-width="2.5"/></svg></button>
                    <button aria-label="选择体"><svg width="18" height="18"><path d="M2 6l4-4h10v9l-4 5H2zM2 6h10v10M12 6l4-4M6 2v9" fill="none" stroke="#a4abb2"/><path d="M8 7v8l3-2 3 1z" fill="#999"/></svg></button>
                    <i class="sep"></i>
                    <button class="drop" aria-label="刷选"><svg width="18" height="18"><path d="M1 7l7-5 3 3-7 6z" fill="#a8adb2" stroke="#777"/><path d="M8 5v11l3-3 2 4 2-1-2-4h3z" fill="#333"/></svg></button>
                    <button class="drop" aria-label="过滤选择"><svg width="18" height="18"><path d="M1 2h14l-5 6v4" fill="none" stroke="#222"/><path d="M1 6l7 7M8 6l-7 7" stroke="#c8141e" stroke-width="2.5"/><path d="M9 15l6-8 2 2-6 8z" fill="#6ac86a" stroke="#222"/></svg></button>
                    <button class="drop" aria-label="加选"><svg width="18" height="18"><path d="M1 2h12v10H1z" fill="none" stroke="#a01030" stroke-width="1.5" stroke-dasharray="3 2"/><path d="M4 14h6M7 11v6" stroke="#111" stroke-width="2"/><path d="M10 5v10l3-3 2 4 2-4-1-2z" fill="#111"/></svg></button>
                    <button class="drop" aria-label="框选"><svg width="18" height="18"><path d="M1 3h14v11H1z" fill="none" stroke="#111" stroke-width="1.5" stroke-dasharray="3 2"/><path d="M10 5v11l3-3 2 4 2-4-1-2z" fill="#333"/></svg></button>
                </div>
                <div class="float-bar bar-show">
                    <button aria-label="隐藏"><svg width="14" height="18"><use href="#bulb-off"/></svg></button>
                    <button aria-label="显示"><svg width="14" height="18"><use href="#bulb"/></svg></button>
                    <button aria-label="切换显示"><svg width="18" height="18"><circle cx="5" cy="5" r="3" fill="#ccc" stroke="#111" stroke-width="1.5"/><circle cx="13" cy="13" r="4" fill="#ffc020" stroke="#b07800"/><path d="M11 3h4v4M13 6l2 2 2-2M7 15H3v-4M1 12l2-2 2 2" fill="none" stroke="#111"/></svg></button>
                    <button aria-label="拾取隐藏"><svg width="18" height="18"><path d="M2 2v9l3-2 2 3 1-4z" fill="#b8bec4"/><circle cx="13" cy="9" r="3" fill="#e6e9ec" stroke="#b0b6bc"/><path d="M12 13h3v3h-3z" fill="#b0b6bc"/></svg></button>
                    <button aria-label="后退"><svg width="18" height="18"><path d="M3 9l6-6v3h4v6H9v3z" fill="#dce0e4" stroke="#a4abb2"/></svg></button>
                    <button aria-label="前进"><svg width="18" height="18"><path d="M15 9L9 3v3H5v6h4v3z" fill="#dce0e4" stroke="#a4abb2"/></svg></button>
                    <i class="sep"></i>
                    <button class="drop" aria-label="着色"><svg width="18" height="18"><path d="M2 6l4-4h10v9l-4 5H2z" fill="#8c8ce8" stroke="#18184a"/><path d="M2 6h10v10M12 6l4-4" fill="none" stroke="#18184a"/></svg></button>
                    <button class="drop" aria-label="体选择"><svg width="18" height="18"><path d="M1 6l4-4h10v9l-4 5H1z" fill="#c8a070" stroke="#3a2408"/><path d="M1 6h10v10M11 6l4-4M5 6v10" fill="none" stroke="#3a2408"/><path d="M9 5v11l3-3 2 4 2-1-1-5z" fill="#111"/></svg></button>
                </div>
                <div class="float-bar bar-filter">
                    <button aria-label="返回"><svg width="18" height="18"><path d="M3 7c7-4 12-3 12 1 0 4-5 5-10 4M7 9l-4 3 4 4" fill="none" stroke="#222" stroke-width="2.5"/></svg></button>
                    <button aria-label="过滤"><svg width="20" height="20"><path d="M1 2h8v5H1z" fill="none" stroke="#a4abb2" stroke-dasharray="2 1"/><use href="#funnel"/></svg></button>
                    <i class="sep"></i>
                    <button aria-label="坐标过滤"><svg width="20" height="20"><path d="M5 2v7M3 4l2-3 2 3M5 8l-4 3M5 8l6 2" fill="none" stroke="#1c5aa8" stroke-width="1.5"/><path d="M9 9h9l-3 4v5h-2v-5z" fill="#fff" stroke="#111"/></svg></button>
                    <i class="sep"></i>
                    <button aria-label="点过滤"><svg width="20" height="20"><circle cx="5" cy="4" r="3" fill="none" stroke="#a4abb2"/><circle cx="13" cy="4" r="3" fill="none" stroke="#a4abb2"/><path d="M2 9h6v6H2z" fill="none" stroke="#a4abb2"/><use href="#funnel"/></svg></button>
                    <button aria-label="面过滤"><svg width="20" height="20"><path d="M1 9l7-6 4 2-6 8z" fill="#d4d8dc" stroke="#a4abb2"/><use href="#funnel"/></svg></button>
                    <button aria-label="线过滤"><svg width="20" height="20"><path d="M2 14l1-10 4 3 7-5-2 6" fill="none" stroke="#a4abb2"/><use href="#funnel"/></svg></button>
                    <button aria-label="弧过滤"><svg width="20" height="20"><path d="M10 2L2 8l6 8" fill="none" stroke="#a4abb2" stroke-width="1.5"/><use href="#funnel"/></svg></button>
                    <button aria-label="刀具过滤"><svg width="20" height="20"><path d="M1 2h14v3H1zM5 5h5v9H5z" fill="none" stroke="#a4abb2"/><use href="#funnel"/></svg></button>
                    <button aria-label="平面过滤"><svg width="20" height="20"><path d="M1 11l6-7h11l-5 7z" fill="none" stroke="#a4abb2"/><use href="#funnel"/></svg></button>
                    <button aria-label="尺寸过滤"><svg width="20" height="20"><path d="M2 1v8M17 1v8M3 4h13M2 16l7-7" fill="none" stroke="#a4abb2"/><use href="#funnel"/></svg></button>
                    <i class="sep"></i>
                    <button aria-label="树过滤"><svg width="20" height="20"><path d="M2 2v14h7M2 9h5l5-6h4" fill="none" stroke="#a4abb2"/><use href="#funnel"/></svg></button>
                    <button aria-label="体过滤"><svg width="20" height="20"><path d="M2 5l3-3h9v8l-3 5H2zM2 5h9v9" fill="none" stroke="#8a9198"/><use href="#funnel"/></svg></button>
                    <i class="sep"></i>
                    <button class="next" aria-label="更多过滤"><svg width="20" height="20"><circle cx="8" cy="5" r="2" fill="none" stroke="#a4abb2"/><path d="M2 3l3 3" stroke="#a4abb2"/><use href="#funnel"/></svg></button>
                </div>

                <form class="dialog">
                    <header class="dialog-title">
                        <svg width="15" height="13"><path d="M0 0h15v13H0z" fill="#f4f8fa" stroke="#aab"/><path d="M1 2h6v8H1z" fill="#3c7c78"/><path d="M12 2v6M12 9v2" stroke="#456"/></svg>
                        <h2>后处理</h2>
                        <button type="button" aria-label="关闭"><svg width="12" height="10"><path d="M2 1l8 8M10 1L2 9" stroke="#fff" stroke-width="2.5"/></svg></button>
                    </header>
                    <div class="dialog-body">
                        <button type="button" class="param-btn">机床参数</button>

                        <div class="picker">
                            <div>
                                <h3>可用的程序</h3>
                                <div class="tree dim">
                                    <div class="tree-head">刀轨/程序名称</div>
                                    <ul>
                                        <li><i class="toggle"></i><svg width="17" height="15"><use href="#folder"/></svg><span>传统设置</span></li>
                                        <li class="l2"><i class="toggle"></i><svg width="15" height="15"><use href="#check"/></svg><span>TP_MODEL</span></li>
                                        <li class="l3"><i class="elbow"></i><svg width="15" height="15"><use href="#check"/></svg><span class="sel">2X-轮廓_2</span></li>
                                    </ul>
                                    <div class="scroll"><i class="prev"></i><b></b><i class="next"></i></div>
                                </div>
                            </div>
                            <div class="movers">
                                <button type="button" aria-label="添加"><svg width="10" height="12"><use href="#arrow-r"/></svg></button>
                                <button type="button" aria-label="全部添加"><svg width="14" height="12"><use href="#arrow-r" x="-1" width="10"/><use href="#arrow-r" x="4" width="10"/></svg></button>
                                <button type="button" aria-label="全部移除"><svg width="14" height="12"><use href="#arrow-l" x="5" width="10"/><use href="#arrow-l" x="0" width="10"/></svg></button>
                                <button type="button" aria-label="移除"><svg width="10" height="12"><use href="#arrow-l"/></svg></button>
                            </div>
                            <div>
                                <h3>处理列表</h3>
                                <div class="tree">
                                    <div class="tree-head">刀轨/程序名称</div>
                                    <ul>
                                        <li><i class="toggle"></i><svg width="17" height="15"><use href="#folder"/></svg><span>传统设置</span></li>
                                        <li class="l2"><i class="toggle"></i><svg width="15" height="15"><use href="#check"/></svg><span>TP_MODEL (All)</span></li>
                                        <li class="l3"><i class="elbow"></i><svg width="15" height="15"><use href="#check"/></svg><span>2X-轮廓_2</span></li>
                                    </ul>
                                    <div class="scroll long"><i class="prev"></i><b></b><i class="next"></i></div>
                                </div>
                            </div>
                        </div>

                        <div class="icon-row">
                            <button type="button" aria-label="上移"><svg width="17" height="17"><path d="M1 2h9v8H1z" fill="#fff" stroke="#222"/><path d="M3 4h5M3 7h5" stroke="#222"/><path d="M11 16v-5H8l4-5 4 5h-2v5z" fill="#78508c" stroke="#321"/></svg></button>
                            <span></span>
                            <button type="button" aria-label="分组"><svg width="17" height="17"><path d="M1 14V2h4l1 2h7v6z" fill="#ffe060" stroke="#8a6a08"/><path d="M6 8h8M8 11h8M8 14h8" stroke="#111" stroke-width="2"/></svg></button>
                            <button type="button" aria-label="排序"><svg width="17" height="17"><path d="M1 3h12M1 8h7M1 13h4" stroke="#111" stroke-width="2"/><path d="M13 3v9M10 10l3 5 3-5z" stroke="#1c5aa8" fill="#1c5aa8" stroke-width="2"/></svg></button>
                            <button type="button" aria-label="选择"><svg width="17" height="17"><path d="M1 5h8M1 12h8" stroke="#111" stroke-width="2"/><path d="M9 4l3 3 5-6" stroke="#128a20" fill="none" stroke-width="1.8"/><path d="M10 9l6 6M16 9l-6 6" stroke="#c8141e" stroke-width="2"/></svg></button>
                        </div>

                        <div class="posts">
                            <div class="post-list">
                                <label for="post">后处理</label>
                                <select id="post" size="8">
                                    <option>DEMO</option>
                                    <option>gpp2test</option>
                                    <option>GPP2_Fanuc_01</option>
                                    <option selected>GPP2_Fanuc_02</option>
                                    <option>GPP2_SIEMENS_01</option>
                                    <option>WL_SIEMENS_V850</option>
                                </select>
                            </div>
                            <div class="post-params">
                                <div class="param-head">
                                    <h3>G代码参数</h3>
                                    <button type="button" aria-label="GPP信息"><svg width="20" height="24" viewBox="0 0 20 24"><path d="M1 1h11l4 4v16H1z" fill="#b4b4b4" stroke="#8a8a8a"/><text x="2" y="12" font-size="7" font-family="Liberation Sans" font-weight="700" fill="#555">GPP</text><path d="M3 15h8M3 18h8" stroke="#666"/><circle cx="14" cy="18" r="5" fill="#8c8c8c"/><path d="M14 15v6" stroke="#ddd" stroke-width="2"/></svg></button>
                                    <button type="button" aria-label="恢复"><svg width="17" height="17"><path d="M2 2h3M7 2h4M13 2h4M2 5h3M7 5h4M13 5h4" stroke="#111"/><path d="M16 9v3H7v3l-6-4 6-4v2z" fill="#0a14b4" stroke="#040848"/></svg></button>
                                </div>
                                <div class="param-box">
                                    <table>
                                        <thead><tr><th>后处理参数</th><th class="val">值</th></tr></thead>
                                        <tbody>
                                            <tr><td>程序号 Main Program Number</td><td>100</td></tr>
                                            <tr><td>机床坐标 Machine system</td><td>54</td></tr>
                                            <tr><td>是否输出行号?Use Sequencing?(Y/N)</td><td>Y</td></tr>
                                        </tbody>
                                    </table>
                                </div>
                            </div>
                        </div>

                        <div class="job">
                            <label class="tick"><input type="checkbox">创建工作</label>
                            <label for="jobno">工作编号:</label>
                            <input type="text" id="jobno" class="faint" disabled>
                            <label for="jobname">工作名称:</label>
                            <input type="text" id="jobname" disabled>
                        </div>
                        <div class="target">
                            <label for="target">目标文件夹</label>
                            <input type="text" id="target" value="e:">
                            <button type="button" aria-label="浏览"><svg width="17" height="15"><path d="M1 13V4h4l1 2h6v3" fill="#fff6a0" stroke="#222"/><path d="M1 13l3-5h12l-3 5z" fill="#8a7c20" stroke="#222"/><path d="M9 3c2-3 5-2 5 1M12 3l2 2 2-2" fill="none" stroke="#222"/></svg></button>
                        </div>

                        <div class="naming">
                            <label for="rename">重命名文件类型:</label>
                            <div class="combo"><select id="rename"><option>无</option></select></div>
                            <label for="refsys" class="second">参考坐标系:</label>
                            <div class="combo hot"><select id="refsys"><option>MACSYS</option></select></div>
                            <label for="fname" class="off">文件名:</label>
                            <input type="text" id="fname" value="NewPostFile" disabled>
                            <span class="model-name">MODEL</span>
                            <label for="fext" class="off">文件扩展名:</label>
                            <input type="text" id="fext" value="GPP2_Fanuc_02" disabled>
                            <output class="full-name">001_NC.TP_MODEL.GPP2_Fanuc_02</output>
                        </div>

                        <div class="after">
                            <h3>完成后</h3><hr>
                        </div>
                        <div class="finish">
                            <div class="ticks">
                                <label class="tick"><input type="checkbox">显示G代码</label>
                                <label class="tick off"><input type="checkbox" disabled>保持模拟数据</label>
                            </div>
                            <button type="button" aria-label="重算"><svg width="18" height="18"><path d="M2 5h7v8H2zM5 12h11v4H5zM9 8h6v5" fill="#b4b4b4" stroke="#6a6a6a"/><path d="M12 3v6M9 5l3-3 3 3" stroke="#777" fill="none" stroke-width="1.5"/></svg></button>
                            <button type="button" aria-label="确定"><svg width="18" height="18"><path d="M2 9l5 5 9-11" fill="none" stroke="#12921e" stroke-width="3.5"/></svg></button>
                            <button type="button" aria-label="应用"><svg width="18" height="18"><path d="M1 6l5 4 7-8" fill="none" stroke="#12921e" stroke-width="3"/><path d="M8 10v4h5M12 11l4 3-4 3z" fill="#222" stroke="#222"/></svg></button>
                            <button type="button" aria-label="退出"><svg width="18" height="18"><path d="M8 2l8-1v15l-4 1V4H8z" fill="#ffd020" stroke="#9a6c00"/><path d="M2 7l8 9M10 7l-8 9" stroke="#d08000" stroke-width="2.5"/></svg></button>
                        </div>
                    </div>
                    <svg class="resize" width="12" height="12"><path d="M0 12L12 0M4 12l8-8M8 12l4-4" stroke="#8a93a0"/></svg>
                </form>
                <svg class="cursor" width="20" height="28" viewBox="0 0 20 28"><path d="M1 1v23l5-5 4 8 4-2-4-8h8z" fill="#fff" stroke="#333" stroke-width="1.3"/></svg>
            </section>

            <section class="monitor">
                <header>
                    <h2>NC计算监视器</h2>
                    <button aria-label="固定"><svg width="8" height="10"><path d="M2 1h4v4H2zM0 5h8M4 5v5" fill="none" stroke="#345"/></svg></button>
                </header>
                <div class="monitor-list">
                    <table>
                        <thead><tr><th class="w84">刀轨文件夹</th><th class="w60">程序</th><th class="w60">注释</th><th class="w84">刀具</th><th class="w60">坐标系</th><th class="w120">状况</th><th class="w60">进度</th></tr></thead>
                    </table>
                </div>
                <footer>
                    <button aria-label="停止"><svg width="14" height="16"><path d="M3 3l8 9M11 2L3 13" stroke="#444" stroke-width="2.5"/><circle cx="3" cy="13" r="2" fill="#888"/></svg></button>
                    <button aria-label="退出"><svg width="16" height="16"><path d="M6 1h8v13h-3zM6 1v10l5 3V4z" fill="#7a8ae0" stroke="#0a1470" stroke-width="1.3"/><path d="M0 12h6" stroke="#0a1470" stroke-width="1.5"/></svg></button>
                </footer>
            </section>
        </div>
    </main>

    <footer class="statusbar">
        <span class="s-msg"></span><span class="s-cell"></span><span class="s-cell"></span><span class="s-cell"></span>
        <span class="s-doc">001_NC : NC-Standard</span>
        <span class="s-unit">单位:mm</span>
    </footer>

    <div class="taskbar">
        <button class="start" aria-label="开始"><svg width="36" height="36" viewBox="0 0 36 36"><circle cx="18" cy="18" r="17" fill="url(#gOrb)" stroke="#375a7c"/><path d="M9 11q4-3 8-1l-1 7q-4-2-8 1z" fill="#f0602c"/><path d="M19 11q4 2 9 0l-2 7q-4 2-8 0z" fill="#8cc83c"/><path d="M8 20q4-2 8-1l-1 7q-4-2-8 1z" fill="#4cb0f0"/><path d="M18 20q4 2 8 0l-1 7q-4 2-8 0z" fill="#ffd03c"/></svg></button>
        <button class="task" aria-label="浏览器"><svg width="34" height="34" viewBox="0 0 34 34"><circle cx="17" cy="16" r="12" fill="none" stroke="#2a8cdc" stroke-width="7"/><path d="M16 31q-4 0-4-4 0-3 4-3 1-5 6-5 5 0 6 5 4 0 4 4 0 3-4 3z" fill="#fff"/></svg></button>
        <button class="task" aria-label="资源管理器"><svg width="34" height="34" viewBox="0 0 34 34"><path d="M2 29V4h9l2 3h18v22z" fill="#f4d878" stroke="#b89030"/><path d="M4 7h26M2 11h28" stroke="#fff0b0" stroke-width="3"/><path d="M5 3h4v3H5z" fill="#3a9a4a"/><path d="M13 5h4v3h-4z" fill="#d04040"/><path d="M21 7h5v3h-5z" fill="#4080d0"/><path d="M5 31V20h24v11h-6v-5H11v5z" fill="#a8dcf0" stroke="#5aa0c8"/></svg></button>
        <button class="task flat" aria-label="地球"><svg width="34" height="34" viewBox="0 0 34 34"><circle cx="17" cy="18" r="13" fill="url(#gGlobe)"/><path d="M5 2h14l-5 15z" fill="#c01840" stroke="#700820"/><path d="M3 30c8 4 26-6 29-14-4-6-6-3-5-3M3 30l7-4" fill="none" stroke="#e8b848" stroke-width="3"/></svg></button>
        <button class="task active" aria-label="Cimatron"><svg width="32" height="32"><use href="#ci"/></svg></button>
        <button class="task" aria-label="录制"><svg width="32" height="32" viewBox="0 0 32 32"><circle cx="16" cy="16" r="15" fill="#111" stroke="#fff" stroke-width="2"/><circle cx="16" cy="16" r="8" fill="#e82020"/></svg></button>
        <button class="task flat" aria-label="许可"><svg width="32" height="32" viewBox="0 0 32 32"><g stroke="#c01018" stroke-width="3" fill="none"><path d="M3 3l26 26M29 3L3 29M16 4v24M4 16h24M1 8V1h7M24 1h7v7M1 24v7h7M24 31h7v-7M12 6h8M12 26h8M6 12v8M26 12v8"/></g><circle cx="16" cy="16" r="6" fill="#d01820"/></svg></button>
        <div class="tray">
            <svg class="ime" width="16" height="16"><path d="M0 0h16v16H0z" fill="#2478e0"/><circle cx="8" cy="7" r="4" fill="none" stroke="#fff" stroke-width="1.8"/><path d="M9 10h4" stroke="#fff" stroke-width="2"/></svg>
            <svg width="16" height="16"><circle cx="5" cy="8" r="4" fill="#222" stroke="#fff" stroke-width="1.5"/><circle cx="10" cy="8" r="4" fill="none" stroke="#fff" stroke-width="2"/></svg>
            <svg width="16" height="16"><path d="M1 6h4l6-5v14l-6-5H1z" fill="#2c9a74"/><path d="M13 4q3 4 0 8" fill="none" stroke="#4cae8c" stroke-width="1.5"/></svg>
            <svg width="16" height="16"><circle cx="8" cy="8" r="7" fill="#222" stroke="#fff"/><circle cx="8" cy="8" r="4" fill="#e02020"/></svg>
            <svg width="16" height="16"><circle cx="8" cy="8" r="8" fill="#50a828"/><circle cx="8" cy="8" r="6" fill="#f4e020"/><path d="M8 4v8M4 8h8" stroke="#1c7a1c" stroke-width="2"/></svg>
            <svg width="16" height="16"><path d="M0 1h16v14H0z" fill="#1a2410"/><path d="M2 8c4-6 9-5 12-1-4 5-8 5-12 1zM5 8c2-3 5-2 6 0" fill="none" stroke="#76b900" stroke-width="1.5"/><path d="M13 6v6M13 13v2" stroke="#fff020" stroke-width="2"/></svg>
            <svg width="16" height="16"><circle cx="8" cy="8" r="8" fill="#1c3450"/><circle cx="11" cy="6" r="3" fill="none" stroke="#fff" stroke-width="1.5"/><path d="M1 9l6 3 3-4" stroke="#fff" stroke-width="2" fill="none"/></svg>
            <svg width="16" height="16"><path d="M2 1h5v4H1v7h5" fill="#777" stroke="#ccc"/><circle cx="11" cy="11" r="5" fill="#28a028"/><path d="M8 11l2 2 4-4" stroke="#fff" stroke-width="1.5" fill="none"/></svg>
            <svg width="16" height="16"><path d="M2 1v14M3 2h9v7H3" fill="#fff" stroke="#fff" stroke-width="1.5"/><circle cx="11" cy="11" r="5" fill="#d82020"/><path d="M9 9l4 4M13 9l-4 4" stroke="#fff" stroke-width="1.5"/></svg>
            <svg width="16" height="16"><path d="M1 14v-2M4 14v-4M7 14V8M10 14V6M14 14V3" stroke="#fff" stroke-width="2"/></svg>
            <svg width="16" height="16"><path d="M1 6h3l4-4v12l-4-4H1z" fill="#fff"/><path d="M10 5q3 3 0 6" fill="none" stroke="#fff" stroke-width="1.5"/></svg>
        </div>
        <button class="show-desktop" aria-label="显示桌面"></button>
    </div>
</body>
</html>
```
FILE: styles.css
```
:root {
    --title: #82a0b6;
    --panel: #e4eaef;
    --face: #eeeeee;
    --line: #c6d2dc;
    --hot: #fdc98b;
    --hot-line: #e4a05c;
    --ui: "Noto Sans", "Noto Sans CJK SC", sans-serif;
    --dlg: "Liberation Sans", "Noto Sans CJK SC", sans-serif;
}

* {
    box-sizing: border-box;
}

body {
    margin: 0;
    height: 100vh;
    display: flex;
    flex-direction: column;
    overflow: hidden;
    background: #ecedef;
    font-family: var(--ui);
    font-size: 12px;
    color: #000;
}

button {
    margin: 0;
    padding: 0;
    border: none;
    background: none;
    font: inherit;
    color: inherit;
    cursor: pointer;
}

h1, h2, h3, ul {
    margin: 0;
    padding: 0;
    font-size: 12px;
    font-weight: 400;
    list-style: none;
}

svg {
    display: block;
    flex-shrink: 0;
}

.sprite {
    position: absolute;
    width: 0;
    height: 0;
}

/* title bar */
.titlebar {
    display: flex;
    align-items: center;
    flex: 0 0 28px;
    padding: 0 7px;
    background: var(--title);
    color: #fff;
}

.quickbar {
    display: flex;
    align-items: center;
    height: 23px;
    margin-left: 6px;
    padding: 0 1px;
    border: 1px solid #6f8ca6;
    background: #bccbd9;
}

.quickbar button {
    display: flex;
    align-items: center;
    width: 22px;
    padding-left: 1px;
}

.drop::after {
    content: "";
    border: 3px solid transparent;
    border-top: 4px solid #444;
    border-bottom: none;
}

.quickbar .drop {
    width: 30px;
    gap: 2px;
}

.menu {
    display: flex;
    gap: 15px;
    margin-left: 12px;
}

.menu a {
    color: #fff;
    text-decoration: none;
    white-space: nowrap;
}

.doc-title {
    display: flex;
    align-items: center;
    justify-content: center;
    flex: 1;
    gap: 17px;
    padding-left: 13px;
}

.doc-title h1 {
    font-weight: 700;
    font-size: 13px;
    font-family: "Open Sans", sans-serif;
}

.search {
    display: flex;
    align-items: center;
    width: 66px;
    height: 20px;
    padding: 0 5px 0 3px;
    background: #fff;
}

.search input {
    flex: 1;
    width: 40px;
    min-width: 0;
    padding: 0;
    border: none;
    background: none;
    font: italic 12px var(--ui);
}

.search input::placeholder {
    color: #111;
}

.win-controls {
    display: flex;
    gap: 17px;
    margin-left: 10px;
}

/* ribbon */
.ribbon {
    display: flex;
    flex: 0 0 79px;
    gap: 2px;
    padding: 1px 7px 5px 8px;
    background: linear-gradient(#ecedef 73px, #fbfbfb 73px);
}

.group {
    display: flex;
    flex-shrink: 0;
    align-items: flex-start;
    padding-top: 3px;
    border: 1px solid var(--line);
    border-top-color: #f4f6f8;
    background: linear-gradient(#e9edf1, #e0e8ef);
}

.grip {
    width: 6px;
    height: 16px;
    margin: 0 1px 0 2px;
    background: radial-gradient(circle, #7fa3c8 1px, transparent 1px) 0 0 / 3px 4px;
}

.big {
    display: flex;
    flex-direction: column;
    align-items: center;
    width: 36px;
    padding-top: 2px;
    color: #333;
    font-size: 11px;
    line-height: 14px;
}

.big svg {
    height: 28px;
    margin-bottom: 3px;
}

.big span {
    white-space: nowrap;
}

.big.drop::after {
    margin-top: 12px;
}

.disabled {
    color: #a0a5aa;
}

.g-cad .big {
    width: 76px;
    padding-left: 4px;
    padding-right: 4px;
}

.g-cad .big span {
    white-space: normal;
}

.big.wide {
    width: 72px;
}

.col {
    display: flex;
    flex-direction: column;
    margin: -1px 1px 0;
}

.tool {
    display: flex;
    align-items: center;
    justify-content: center;
    width: 36px;
    height: 35px;
}

.tool.on {
    border: 1px solid var(--hot-line);
    background: var(--hot);
}

.tool.letter {
    font: italic bold 24px "Liberation Serif", serif;
}

.g-cad { width: 92px; }
.g-show { width: 169px; }
.g-list { width: 245px; }
.g-offset { width: 94px; }
.g-sketch { width: 106px; }
.g-copy { width: 55px; }
.g-attr { width: 108px; }
.g-dim { width: 79px; }
.g-measure { width: 131px; }
.g-zoom { width: 94px; }
.g-views { width: 83px; }
.g-color { width: 146px; }
.g-model { width: 147px; }

.g-sketch .big {
    width: 40px;
}

.g-sketch .big + .big {
    width: 48px;
}

.g-attr .big {
    width: 50px;
}

.ruled {
    border-left: 1px solid var(--line);
}

.g-list .last .drop {
    width: 46px;
    margin-right: -8px;
    gap: 3px;
}

.g-list .narrow {
    margin-left: 6px;
    margin-right: 0;
    border: solid var(--line);
    border-width: 0 1px;
}

.g-list > .tool {
    width: 24px;
    height: 26px;
}

.mini {
    gap: 6px;
    padding-left: 2px;
}

.view-grid {
    display: grid;
    grid-template-columns: repeat(3, 21px);
    gap: 6px 0;
    padding-left: 2px;
}

.palette {
    display: grid;
    grid-template-columns: repeat(4, 14px);
    grid-template-rows: 13px 13px 6px;
    grid-auto-rows: 13px;
    gap: 2px 1px;
    margin: 2px 2px 0 3px;
}

.palette hr {
    grid-column: 1 / -1;
    width: 100%;
    height: 1px;
    margin: 4px 0;
    border: none;
    background: #c0c8d0;
}

.c-red { background: #f00; }
.c-yellow { background: #ff0; }
.c-blue { background: #00f; }
.c-green { background: #0f0; }
.c-cyan { background: #0ff; }
.c-magenta { background: #f0f; }
.c-white { background: #fff; }
.c-black { background: #000; }
.c-p1 { background: #f0f0f0; }
.c-p2 { background: #ffc8c8; }
.c-p3 { background: #ffe4b4; }
.c-p4 { background: #ffffb8; }
.c-p5 { background: #dcecc4; }
.c-p6 { background: #ccfcdc; }
.c-p7 { background: #a8ecfc; }
.c-p8 { background: #b8ccfc; }

.palette-side {
    display: flex;
    flex-direction: column;
    gap: 2px;
    width: 20px;
    margin-right: 2px;
}

.palette-side .current {
    width: 18px;
    height: 18px;
    background: #0000f0;
}

.palette-side .wheel {
    width: 18px;
    height: 16px;
    background: conic-gradient(#7ce070, #40a0f0, #5060e0, #e050a0, #f05040, #f4e050, #7ce070);
}

.palette-side .pushed {
    margin-top: 6px;
}

.model-col {
    padding: 4px 0 0 6px;
}

.combo {
    position: relative;
}

.combo::after {
    content: "";
    position: absolute;
    right: 5px;
    top: 50%;
    margin-top: -2px;
    border: 4px solid transparent;
    border-top: 5px solid #111;
    border-bottom: none;
    pointer-events: none;
}

.combo select {
    appearance: none;
    width: 100%;
    height: 21px;
    padding: 0 3px;
    border: 1px solid #707070;
    border-radius: 2px;
    background: linear-gradient(#f2f2f2, #d4d4d4);
    font: 12px var(--dlg);
    color: #000;
}

.model-combo {
    width: 116px;
}

.model-combo select {
    height: 20px;
    border-color: #a8b8c8;
    border-radius: 0;
    background: linear-gradient(90deg, #fff 99px, #a8b8c8 99px, #a8b8c8 100px, #eef1f4 100px);
    font: 12px var(--ui);
}

.model-combo::after {
    border-width: 4px 3px 0;
}

.by-tool {
    display: flex;
    align-items: center;
    gap: 6px;
    margin-top: 10px;
    color: #333;
    font-size: 11px;
}

.mdi-controls {
    display: flex;
    flex-direction: column;
    gap: 6px;
    margin-left: auto;
    padding-top: 1px;
}

/* workspace */
.workspace {
    display: flex;
    flex: 1;
    min-height: 0;
}

.sidebar {
    display: flex;
    flex-direction: column;
    align-items: center;
    align-self: flex-start;
    flex: 0 0 75px;
    margin-right: 5px;
    padding: 0 0 14px 4px;
    border-left: 1px solid #aaa;
    border-bottom: 1px solid #c0d4dc;
    border-right: 1px solid #fff;
    background: #e3e9ee;
}

.side-tabs {
    display: flex;
    gap: 4px;
    align-self: stretch;
    height: 8px;
    border-top: 1px solid #777;
}

.side-tabs i {
    width: 7px;
    height: 5px;
    border: 1px solid #889;
    background: #fff;
}

.side-tabs .tan {
    width: 11px;
    background: #e0b888;
}

.side-grip {
    align-self: flex-end;
    width: 16px;
    height: 6px;
    margin: 2px 1px 2px 0;
    background: radial-gradient(circle, #7fa3c8 1px, transparent 1px) 0 0 / 4px 3px;
}

.sidebar button {
    display: flex;
    flex-direction: column;
    align-items: center;
    height: 48px;
    padding: 3px 2px 0;
    color: #333a42;
    font-size: 11px;
    line-height: 16px;
    white-space: nowrap;
}

.sidebar button svg {
    height: 28px;
}

.sidebar .on {
    height: 49px;
    margin-top: 1px;
    border: 1px solid var(--hot-line);
    background: var(--hot);
    padding: 2px 1px 0;
}

.content {
    display: flex;
    flex-direction: column;
    flex: 1;
    min-width: 0;
    margin-right: 3px;
}

.viewport {
    position: relative;
    flex: 1;
    min-height: 0;
    border-left: 2px solid #777;
    border-top: 2px solid #777;
    background: #e2e2e2;
}

.scene {
    width: 100%;
    height: 100%;
}

.float-bar {
    position: absolute;
    top: 10px;
    display: flex;
    align-items: center;
    height: 26px;
    padding: 0 1px;
    border: 1px solid #d0dae2;
    background: #e6ebf0;
}

.float-bar button {
    display: flex;
    align-items: center;
    justify-content: center;
    width: 21px;
    height: 22px;
}

.float-bar .drop {
    width: 30px;
    gap: 1px;
}

.float-bar .sep {
    width: 1px;
    height: 18px;
    background: #a8b4be;
}

.float-bar .next {
    width: 25px;
}

.float-bar .next::after {
    content: "";
    border: 4px solid transparent;
    border-left: 5px solid #111;
    border-right: none;
}

.bar-select { left: 305px; }
.bar-show { left: 505px; }
.bar-filter { left: 727px; }

/* post-processing dialog */
.dialog {
    position: absolute;
    left: 33px;
    top: 49px;
    width: 638px;
    padding: 0 7px 7px;
    border: 1px solid #111;
    border-radius: 6px 6px 0 0;
    background: linear-gradient(#98b4d2, #b9d1ea 32px, #bad4ea);
    box-shadow: inset 0 0 0 1px #7cd4e8;
    font-family: var(--dlg);
    font-size: 12px;
}

.dialog-title {
    display: flex;
    align-items: center;
    gap: 5px;
    height: 29px;
    padding: 5px 2px 0;
}

.dialog-title h2 {
    flex: 1;
}

.dialog-title button {
    display: flex;
    align-items: center;
    justify-content: center;
    width: 31px;
    height: 17px;
    border: 1px solid #5c1818;
    border-radius: 2px;
    background: linear-gradient(#e09a90, #c03c30 50%, #d0604c);
}

.dialog-body {
    min-height: 640px;
    padding-top: 1px;
    background: var(--face);
}

.param-btn {
    display: block;
    width: 112px;
    height: 21px;
    margin-left: 1px;
    border: 1px solid #707070;
    border-radius: 3px;
    background: linear-gradient(#f4f4f4, #d6d6d6);
}

.picker {
    display: grid;
    grid-template-columns: 280px 36px 285px;
    padding-left: 7px;
}

.picker h3 {
    height: 23px;
    padding-left: 6px;
    line-height: 24px;
}

.tree {
    display: flex;
    flex-direction: column;
    height: 147px;
    border: 1px solid #8c8c8c;
    border-right-color: #fff;
    border-bottom-color: #fff;
    background: #fdfdfd;
}

.tree-head {
    height: 19px;
    padding-left: 5px;
    border-bottom: 1px solid #999;
    background: #efefef;
    line-height: 19px;
}

.tree ul {
    flex: 1;
}

.tree li {
    display: flex;
    align-items: center;
    height: 19px;
    padding-left: 12px;
}

.tree li svg {
    margin: 0 3px 0 14px;
}

.tree .l2 {
    padding-left: 39px;
    font-size: 11px;
}

.tree .l3 {
    padding-left: 66px;
}

.tree .l2 svg,
.tree .l3 svg {
    margin-right: 5px;
}

.tree span {
    padding-left: 2px;
    line-height: 19px;
    white-space: nowrap;
}

.tree.dim li span {
    color: #888;
}

.tree.dim .sel {
    flex: 1;
    background: #bcbcbc;
    color: #777;
}

.toggle {
    width: 12px;
    height: 12px;
    border: 1px solid #a0a0a0;
    background: linear-gradient(#111, #111) center / 6px 1px no-repeat #fff;
}

.elbow {
    width: 9px;
    height: 10px;
    margin: 0 -3px 9px 6px;
    border: solid #aaa;
    border-width: 0 0 1px 1px;
}

.scroll {
    display: flex;
    align-items: center;
    justify-content: space-between;
    height: 16px;
    padding: 0 6px;
    background: #f0f0f0;
}

.scroll i {
    border: 4px solid transparent;
}

.scroll .prev {
    border-right: 4px solid #333;
    border-left: none;
}

.scroll .next {
    border-left: 4px solid #333;
    border-right: none;
}

.scroll b {
    width: 102px;
    height: 15px;
    margin: 0 auto 0 8px;
    border: 1px solid #8c8c8c;
    border-radius: 2px;
    background: repeating-linear-gradient(90deg, #777 0 1px, transparent 1px 3px) center / 8px 7px no-repeat, linear-gradient(#f4f4f4, #d0d0d0);
}

.scroll.long b {
    width: 125px;
}

.movers {
    display: flex;
    flex-direction: column;
    align-items: center;
    gap: 18px;
    padding-top: 56px;
}

.icon-row {
    display: flex;
    gap: 8px;
    padding: 9px 16px 0 11px;
}

.icon-row span {
    flex: 1;
}

.posts {
    display: flex;
    gap: 7px;
    margin-top: 27px;
    padding-left: 8px;
}

.post-list {
    display: flex;
    flex-direction: column;
    justify-content: flex-end;
    width: 156px;
}

.post-list label {
    line-height: 18px;
}

.post-list select {
    height: 114px;
    padding: 1px;
    border: 1px solid #828790;
    border-radius: 0;
    background: #fdfdfd;
    font: 11px var(--dlg);
    color: #000;
    overflow: hidden;
    scrollbar-width: none;
}

.post-list option {
    min-height: 13px;
    height: 13px;
    padding: 0 2px;
    line-height: 13px;
}

.post-list option:checked {
    background: linear-gradient(#3297fd, #3297fd);
    color: #fff;
}

.post-params {
    width: 432px;
}

.param-head {
    display: flex;
    align-items: flex-end;
    gap: 6px;
    height: 25px;
    padding-right: 3px;
}

.param-head h3 {
    flex: 1;
    padding-left: 11px;
    line-height: 18px;
}

.param-head button:last-child {
    align-self: flex-start;
    padding-top: 2px;
}

.param-box {
    height: 114px;
    border-left: 1px solid #828790;
    border-top: 1px solid #828790;
    background: #fdfdfd;
}

.param-box table {
    width: 428px;
    border-collapse: collapse;
    table-layout: fixed;
}

.param-box th,
.param-box td {
    height: 17px;
    padding: 0 0 0 6px;
    border-right: 1px solid #b4b4b4;
    border-bottom: 1px solid #b4b4b4;
    text-align: left;
    font-weight: 400;
    font-size: 12px;
    line-height: 16px;
    white-space: nowrap;
}

.param-box td {
    font-size: 11px;
}

.param-box td + td {
    padding-left: 3px;
}

.param-box th {
    height: 18px;
    background: #efefef;
}

.param-box .val {
    width: 184px;
}

.dialog input[type="text"],
.full-name {
    padding: 0 3px;
    border: 1px solid #b8b8b8;
    border-radius: 0;
    background: #fdfdfd;
    font: 11px var(--dlg);
    color: #000;
}

.dialog input[type="text"]:disabled {
    border-color: #a8a8a8;
    background: #ececec;
    color: #777;
}

.dialog input.faint:disabled {
    border-color: #dcdcdc;
}

.dialog #target {
    border-color: #ccc #f4f4f4 #f4f4f4 #ccc;
}

.job,
.target {
    display: flex;
    align-items: center;
    height: 22px;
    margin-top: 11px;
    padding-left: 8px;
}

.job input[type="text"],
.target input {
    height: 22px;
}

.tick {
    display: flex;
    align-items: center;
    gap: 3px;
}

.tick input {
    appearance: none;
    width: 13px;
    height: 13px;
    margin: 0;
    border: 1px solid #8a8a8a;
    background: linear-gradient(135deg, #cfcfcf, #f6f6f6);
    box-shadow: inset 0 0 0 2px #f4f4f4;
}

.tick input:disabled {
    border-color: #bbb;
    background: #f4f4f4;
}

.job .tick {
    width: 117px;
}

#jobno {
    width: 27px;
    margin: 0 10px 0 auto;
}

#jobname {
    width: 293px;
    margin: 0 39px 0 6px;
}

.target {
    margin-top: 6px;
}

.target label {
    width: 118px;
}

#target {
    width: 457px;
    margin-right: 12px;
}

.naming {
    display: grid;
    grid-template-columns: 118px 182px 117px 188px;
    grid-template-rows: 21px 20px 22px;
    row-gap: 5px;
    align-items: center;
    margin-top: 54px;
    padding-left: 8px;
}

.naming .second {
    padding-left: 14px;
}

.naming input {
    height: 20px;
}

.model-name {
    grid-column: 4;
    padding-left: 59px;
    font-size: 11px;
}

.hot select {
    border-color: #3c7fb1;
    background: linear-gradient(#e6f4fc, #a4d8f4);
    font-size: 11px;
}

.full-name {
    grid-column: 3 / 5;
    height: 22px;
    margin-left: 14px;
    border-color: #d8d8d8 #fff #fff #d8d8d8;
    background: #efefef;
    line-height: 20px;
}

.off {
    color: #8a8a8a;
}

.after {
    display: flex;
    align-items: center;
    gap: 52px;
    height: 14px;
    padding: 0 10px 0 6px;
}

.after hr {
    flex: 1;
    height: 2px;
    margin: 0;
    border: none;
    border-top: 1px solid #9a9a9a;
    background: #fff;
}

.finish {
    display: flex;
    align-items: flex-start;
    gap: 3px;
    padding: 4px 14px 0 8px;
}

.finish > button {
    margin-top: 12px;
}

.ticks {
    display: flex;
    flex-direction: column;
    gap: 6px;
    flex: 1;
    line-height: 14px;
}

.ticks .tick {
    height: 14px;
}

.finish button,
.monitor footer button {
    display: flex;
    align-items: center;
    justify-content: center;
    width: 24px;
    height: 26px;
    border: 1px solid #fff;
    border-right-color: #a0a0a0;
    border-bottom-color: #a0a0a0;
}

.resize {
    position: absolute;
    right: 7px;
    bottom: 7px;
}

.cursor {
    position: absolute;
    left: 475px;
    top: 595px;
}

/* calculation monitor */
.monitor {
    margin-top: 6px;
    border: 1px solid #777;
    border-width: 1px 2px 2px 1px;
}

.monitor header {
    display: flex;
    align-items: center;
    justify-content: space-between;
    height: 22px;
    padding: 0 7px 0 3px;
    border-bottom: 1px solid #777;
    background: #bdcad7;
    color: #44505e;
}

.monitor-list {
    min-height: 92px;
    background: linear-gradient(#eee 21px, #fdfdfd 21px);
}

.monitor table {
    border-collapse: collapse;
    table-layout: fixed;
}

.monitor th {
    height: 21px;
    padding: 2px 0 0 6px;
    border-right: 1px solid #999;
    border-bottom: 1px solid #999;
    text-align: left;
    font: 12px var(--dlg);
    line-height: 18px;
}

.w60 { width: 60px; }
.w84 { width: 85px; }
.w120 { width: 120px; }

.monitor footer {
    display: flex;
    justify-content: flex-end;
    gap: 8px;
    padding: 8px 8px 8px 0;
    background: var(--face);
}

/* status bar */
.statusbar {
    display: flex;
    flex: 0 0 20px;
    justify-content: flex-end;
    gap: 3px;
    padding: 1px 1px 1px;
    background: var(--face);
    line-height: 17px;
}

.statusbar span {
    width: 101px;
    padding-left: 2px;
    border: 1px solid #9c9c9c;
    border-right-color: #fff;
    border-bottom-color: #fff;
    white-space: nowrap;
}

.statusbar .s-msg { width: 272px; }
.statusbar .s-doc { width: 201px; }
.statusbar .s-unit { width: 65px; }

/* taskbar */
.taskbar {
    display: flex;
    flex: 0 0 40px;
    align-items: center;
    gap: 3px;
    border-top: 1px solid #44556c;
    background: linear-gradient(90deg, #8496ac 0, #8c9fb6 58px, #a6bfda 59px, #a6bfda 1590px, #7e93ac 1640px);
}

.start {
    width: 57px;
    padding-left: 9px;
}

.task {
    display: flex;
    align-items: center;
    justify-content: center;
    width: 59px;
    height: 39px;
    border: 1px solid #46587a;
    border-radius: 3px;
    background: linear-gradient(135deg, #d0dcea, #a4bcd8);
    box-shadow: inset 0 0 0 1px #d4e2f0;
}

.task.active {
    background: linear-gradient(135deg, #f4f6fa, #d4e0ee);
}

.task.flat {
    border-color: transparent;
    background: none;
    box-shadow: none;
}

.tray {
    display: flex;
    align-items: center;
    gap: 8px;
    margin-left: auto;
    padding-right: 6px;
}

.tray .ime {
    margin: 0 8px 6px 0;
}

.show-desktop {
    width: 14px;
    height: 39px;
    border: 1px solid #56687e;
    background: linear-gradient(135deg, #a8b6c6, #66788e);
}
```
